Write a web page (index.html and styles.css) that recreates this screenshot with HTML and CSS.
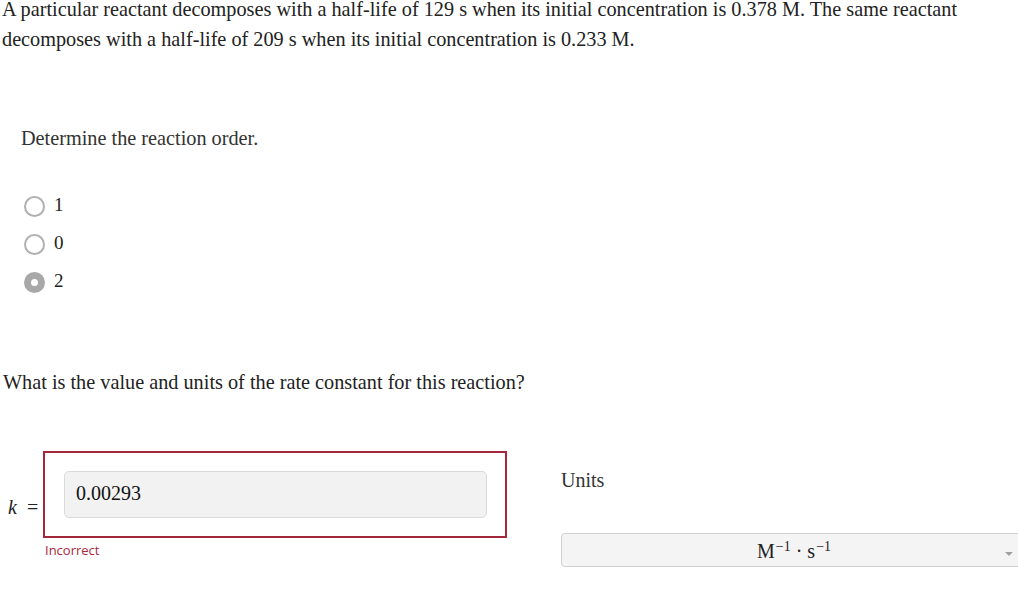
FILE: index.html
```html
<!DOCTYPE html>
<html>
<head>
<meta charset="utf-8">
<link rel="stylesheet" href="styles.css">
</head>
<body>
<p class="intro">A particular reactant decomposes with a half-life of 129 s when its initial concentration is 0.378 M. The same reactant decomposes with a half-life of 209 s when its initial concentration is 0.233 M.</p>

<div class="part">
  <div class="prompt">Determine the reaction order.</div>
  <ul class="options">
    <li class="option"><span class="radio"></span><span class="opt-label">1</span></li>
    <li class="option"><span class="radio"></span><span class="opt-label">0</span></li>
    <li class="option"><span class="radio checked"></span><span class="opt-label">2</span></li>
  </ul>
</div>

<div class="question">What is the value and units of the rate constant for this reaction?</div>

<div class="answer">
  <div class="k-label"><i>k</i> =</div>
  <div class="value-col">
    <div class="value-box">
      <div class="value-input">0.00293</div>
    </div>
    <div class="feedback">Incorrect</div>
  </div>
  <div class="units-col">
    <div class="units-title">Units</div>
    <div class="units-select">
      <span class="units-text">M<sup>−1</sup> · s<sup>−1</sup></span>
      <span class="caret"></span>
    </div>
  </div>
</div>
</body>
</html>
```
FILE: styles.css
```css
html, body {
  margin: 0;
  padding: 0;
  overflow: hidden;
  background: #fff;
}
body {
  font-family: "Liberation Serif", "Times New Roman", serif;
  color: #222;
  width: 1018px;
  height: 594px;
}
.intro {
  font-size: 20.25px;
  line-height: 30px;
  margin: -6px 0 0 2px;
}
.part {
  padding-left: 21px;
  margin-top: 72px;
}
.prompt {
  font-size: 20.25px;
  line-height: 24px;
  color: #333;
}
.options {
  list-style: none;
  margin: 37px 0 0 0;
  padding: 0 0 0 3px;
}
.option {
  height: 38px;
  display: flex;
  align-items: center;
  gap: 9px;
}
.radio {
  width: 21px;
  height: 21px;
  box-sizing: border-box;
  border: 2px solid #b0b0b0;
  border-radius: 50%;
  background: #fff;
}
.radio.checked {
  border: 7px solid #a8a8a8;
}
.opt-label {
  font-size: 19px;
  line-height: 24px;
  color: #222;
  position: relative;
  top: -1px;
}
.question {
  font-size: 20.25px;
  line-height: 24px;
  margin: 69px 0 0 3px;
}
.answer {
  display: flex;
  align-items: flex-start;
  margin-top: 57px;
}
.answer > div {
  flex-shrink: 0;
}
.k-label {
  width: 43px;
  box-sizing: border-box;
  padding: 44px 0 0 8px;
  font-size: 20px;
  line-height: 24px;
  white-space: nowrap;
}
.k-label i {
  margin-right: 5px;
}
.value-col {
  width: 464px;
}
.value-box {
  box-sizing: border-box;
  width: 464px;
  height: 87px;
  border: 2px solid #a4283b;
  padding: 18px 18px 18px 19px;
}
.value-input {
  box-sizing: border-box;
  height: 47px;
  background: #f2f2f2;
  border: 1px solid #dadada;
  border-radius: 5px;
  padding: 0 0 3px 11px;
  display: flex;
  align-items: center;
  font-size: 20px;
  line-height: 24px;
  color: #111;
}
.feedback {
  font-family: "Open Sans", "Liberation Sans", sans-serif;
  font-size: 13px;
  line-height: 18px;
  color: #a8283b;
  margin: 3px 0 0 2px;
}
.units-col {
  margin-left: 54px;
  padding-top: 17px;
}
.units-title {
  font-size: 20px;
  line-height: 24px;
  color: #333;
}
.units-select {
  position: relative;
  box-sizing: border-box;
  width: 466px;
  height: 34px;
  margin-top: 41px;
  background: #f4f4f4;
  border: 1px solid #cfcfcf;
  border-radius: 4px;
  display: flex;
  align-items: center;
  justify-content: center;
}
.units-text {
  font-size: 20px;
  line-height: 24px;
  color: #222;
  position: relative;
  top: 1px;
}
.units-text sup {
  font-size: 14px;
  line-height: 0;
  vertical-align: 7px;
  margin-left: 1px;
}
.caret {
  position: absolute;
  right: 13px;
  top: 18px;
  width: 0;
  height: 0;
  border-left: 4px solid transparent;
  border-right: 4px solid transparent;
  border-top: 4px solid #a0a0a0;
}
```
